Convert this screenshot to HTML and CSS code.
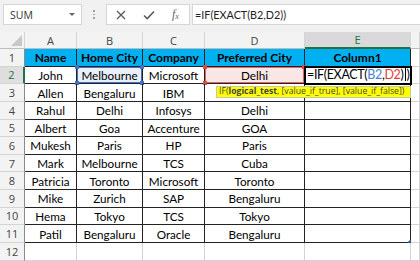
FILE: index.html
```html
<!DOCTYPE html>
<html>
<head>
<meta charset="utf-8">
<link rel="stylesheet" href="styles.css">
</head>
<body>
<div class="app">
  <div class="toolbar">
    <div class="namebox"><span>SUM</span><span class="caret"></span></div>
    <div class="grip"><i></i><i></i><i></i></div>
    <div class="fbtns">
      <svg class="ico" width="10" height="10" viewBox="0 0 10 10"><path d="M1 1L9 9M9 1L1 9" stroke="#595959" stroke-width="1.3" fill="none"/></svg>
      <svg class="ico" width="12" height="10" viewBox="0 0 12 10"><path d="M1 5.5L4.2 8.6L11 1.4" stroke="#595959" stroke-width="1.5" fill="none"/></svg>
      <span class="fx">f<sub>x</sub></span>
    </div>
    <div class="fbox">=IF(EXACT(B2,D2))</div>
  </div>
  <div class="sheet">
    <div class="ch corner"><span class="tri"></span></div>
    <div class="ch">A</div><div class="ch">B</div><div class="ch">C</div><div class="ch">D</div><div class="ch sel">E</div><div class="ch"></div>

    <div class="rh">1</div>
    <div class="c t hd">Name</div><div class="c t hd">Home City</div><div class="c t hd">Company</div><div class="c t hd">Preferred City</div><div class="c t hd">Column1</div><div class="c"></div>

    <div class="rh sel">2</div>
    <div class="c t">John</div>
    <div class="c t refb">Melbourne<i class="h tl"></i><i class="h tr"></i><i class="h bl"></i><i class="h br"></i></div>
    <div class="c t">Microsoft</div>
    <div class="c t refd">Delhi<i class="h tl"></i><i class="h tr"></i><i class="h bl"></i></div>
    <div class="c t active"><span class="edit">=IF(EXACT(<span class="cb">B2</span>,<span class="cd">D2</span>)<span class="cur"></span>)</span>
      <div class="tip">IF(<b>logical_test</b>, [value_if_true], [value_if_false])</div>
    </div>
    <div class="c"></div>

    <div class="rh">3</div>
    <div class="c t">Allen</div><div class="c t">Bengaluru</div><div class="c t">IBM</div><div class="c t"></div><div class="c t"></div><div class="c"></div>

    <div class="rh">4</div>
    <div class="c t">Rahul</div><div class="c t">Delhi</div><div class="c t">Infosys</div><div class="c t">Delhi</div><div class="c t"></div><div class="c"></div>

    <div class="rh">5</div>
    <div class="c t">Albert</div><div class="c t">Goa</div><div class="c t">Accenture</div><div class="c t">GOA</div><div class="c t"></div><div class="c"></div>

    <div class="rh">6</div>
    <div class="c t">Mukesh</div><div class="c t">Paris</div><div class="c t">HP</div><div class="c t">Paris</div><div class="c t"></div><div class="c"></div>

    <div class="rh">7</div>
    <div class="c t">Mark</div><div class="c t">Melbourne</div><div class="c t">TCS</div><div class="c t">Cuba</div><div class="c t"></div><div class="c"></div>

    <div class="rh">8</div>
    <div class="c t">Patricia</div><div class="c t">Toronto</div><div class="c t">Microsoft</div><div class="c t">Toronto</div><div class="c t"></div><div class="c"></div>

    <div class="rh">9</div>
    <div class="c t">Mike</div><div class="c t">Zurich</div><div class="c t">SAP</div><div class="c t">Bengaluru</div><div class="c t"></div><div class="c"></div>

    <div class="rh">10</div>
    <div class="c t">Hema</div><div class="c t">Tokyo</div><div class="c t">TCS</div><div class="c t">Tokyo</div><div class="c t"></div><div class="c"></div>

    <div class="rh">11</div>
    <div class="c t">Patil</div><div class="c t">Bengaluru</div><div class="c t">Oracle</div><div class="c t">Bengaluru</div><div class="c t last"><span class="grow"></span></div><div class="c"></div>

    <div class="rh">12</div>
    <div class="c"></div><div class="c"></div><div class="c"></div><div class="c"></div><div class="c"></div><div class="c"></div>
  </div>
</div>
</body>
</html>
```
FILE: styles.css
```css
* { box-sizing: border-box; }
html, body { margin: 0; padding: 0; }
body { width: 420px; height: 261px; overflow: hidden; background: #fff; font-family: "Lato", "Liberation Sans", sans-serif; }
.app { width: 420px; height: 261px; display: flex; flex-direction: column; }

.toolbar { height: 32px; background: #f1f1f1; display: flex; align-items: flex-start; padding: 4px 0 0 3px; }
.namebox { width: 79px; height: 21px; background: #fff; border: 1px solid #d6d6d6; display: flex; align-items: center; justify-content: space-between; padding: 0 6px 0 6px; font-family: "Open Sans", sans-serif; font-size: 10.5px; color: #333; }
.caret { width: 0; height: 0; border-left: 3px solid transparent; border-right: 3px solid transparent; border-top: 3px solid #666; }
.grip { width: 24px; height: 21px; display: flex; flex-direction: column; align-items: center; justify-content: center; gap: 2px; }
.grip i { width: 1.5px; height: 1.5px; background: #a0a0a0; display: block; }
.fbtns { width: 84px; height: 21px; background: #fff; border: 1px solid #d6d6d6; display: flex; align-items: center; padding-left: 9px; gap: 17px; }
.fx { font-family: "Liberation Serif", serif; font-style: italic; font-size: 12px; color: #666; line-height: 1; }
.fx sub { font-size: 8px; vertical-align: -1px; }
.fbox { flex: 1; margin-left: 2px; height: 21px; background: #fff; border: 1px solid #d6d6d6; border-right: none; display: flex; align-items: center; padding-left: 2px; font-size: 10.8px; color: #222; }

.sheet { flex: 1; display: grid; grid-template-columns: 25px 52px 66px 62px 100px 106px 1fr; grid-template-rows: 17px repeat(11, 17.64px) 1fr; }
.ch { background: #f3f3f3; border-right: 1px solid #d4d4d4; border-bottom: 1px solid #bdbdbd; display: flex; align-items: center; justify-content: center; font-family: "Open Sans", sans-serif; font-size: 11px; color: #444; }
.ch.sel { background: #d9d9d9; color: #217346; border-bottom: 2px solid #217346; }
.corner { position: relative; }
.tri { position: absolute; right: 2px; bottom: 2px; width: 0; height: 0; border-left: 11px solid transparent; border-bottom: 11px solid #c8c8c8; }
.rh { background: #f3f3f3; border-right: 1px solid #8a8a8a; border-bottom: 1px solid #d4d4d4; display: flex; align-items: center; justify-content: center; font-family: "Open Sans", sans-serif; font-size: 11px; color: #444; }
.rh.sel { background: #dedede; color: #217346; border-right: 2px solid #217346; }
.c { border-right: 1px solid #d4d4d4; border-bottom: 1px solid #d4d4d4; display: flex; align-items: center; justify-content: center; font-size: 11.7px; color: #000; white-space: nowrap; position: relative; }
.c.t { border-color: #222; }
.c.hd { background: #00b0f0; font-weight: bold; font-size: 12px; }
.refb { background: #e8effa; box-shadow: inset 0 0 0 1px #4472c4; }
.refd { background: #fbe6e6; box-shadow: inset 0 0 0 1px #e06666; }
.h { position: absolute; width: 4px; height: 4px; }
.refb .h { background: #4472c4; }
.refd .h { background: #e04848; }
.h.tl { left: -2px; top: -2px; }
.h.tr { right: -2px; top: -2px; }
.h.bl { left: -2px; bottom: -2px; }
.h.br { right: -2px; bottom: -2px; }
.active { outline: 2px solid #000; outline-offset: -1px; z-index: 3; justify-content: flex-start; padding-left: 2px; background: #fff; overflow: visible; }
.edit { font-size: 12.5px; letter-spacing: -0.35px; color: #000; display: flex; align-items: center; }
.cb { color: #4a7fd4; }
.cd { color: #e03c3c; }
.cur { display: inline-block; width: 1px; height: 13px; background: #000; margin: 0 1px; }
.tip { position: absolute; left: -89px; top: 19px; width: 195px; height: 12px; background: #ffff00; border: 1px solid #c9c9a0; font-family: "Open Sans", sans-serif; font-size: 8.7px; color: #444; display: flex; align-items: center; padding-left: 2px; line-height: 1; white-space: nowrap; overflow: hidden; }
.tip b { font-weight: bold; }
.grow { position: absolute; right: -1px; bottom: -1px; width: 0; height: 0; border-left: 4px solid transparent; border-bottom: 4px solid #2f5597; }
```
